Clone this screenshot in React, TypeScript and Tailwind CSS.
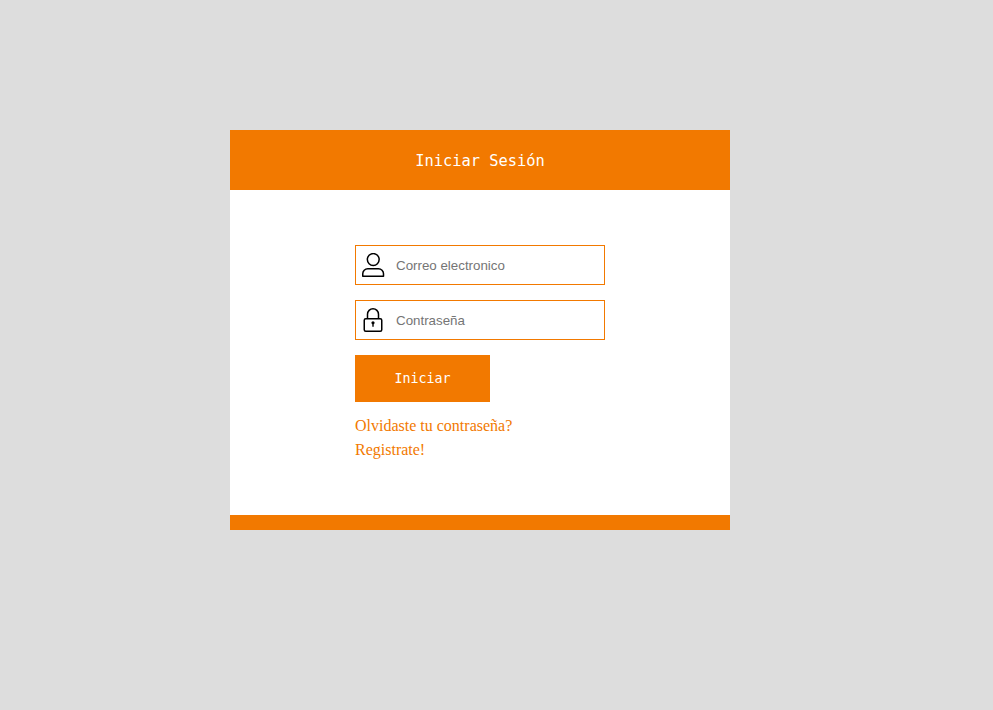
import React from 'react';

const UserIcon = () => (
  <svg className="w-6 h-6 shrink-0" viewBox="0 0 24 24" fill="none" stroke="#000" strokeWidth={1.5}>
    <circle cx="12.25" cy="6.5" r="5.9" />
    <path d="M1.75 23.25v-2.5c0-2.75 2.25-5 5-5h10.75c2.75 0 5 2.25 5 5v2.5z" strokeLinejoin="round" />
  </svg>
);

const LockIcon = () => (
  <svg className="w-6 h-6 shrink-0" viewBox="0 0 24 24" fill="none" stroke="#000" strokeWidth={1.5}>
    <path d="M6.5 10.5V6.25a5.5 5.5 0 0 1 11 0v4.25" />
    <rect x="3.25" y="10.75" width="17.5" height="12.5" rx="1.5" />
    <circle cx="12" cy="14.75" r="1.6" fill="#000" stroke="none" />
    <path d="M12 15v3.75" strokeWidth={1.4} />
  </svg>
);

const App: React.FC = () => {
  return (
    <div className="min-h-screen bg-[#dddddd] pt-[130px] pl-[230px]">
      <div className="w-[500px] h-[400px] bg-white flex flex-col">
        <div className="h-[60px] pt-1 bg-[#f27900] flex items-center justify-center text-white text-[15.4px] font-['DejaVu_Sans_Mono',monospace]">
          Iniciar Sesión
        </div>

        <div className="flex-1 pt-[55px] pl-[125px]">
          <div className="w-[250px] h-10 border border-[#f27900] flex items-center pl-[5px]">
            <UserIcon />
            <input
              className="ml-[11px] pt-[2px] flex-1 min-w-0 outline-none text-[13.33px] font-['Liberation_Sans',Arial,sans-serif] placeholder:text-[#757575]"
              placeholder="Correo electronico"
            />
          </div>
          <div className="w-[250px] h-10 mt-[15px] border border-[#f27900] flex items-center pl-[5px]">
            <LockIcon />
            <input
              className="ml-[11px] pt-[2px] flex-1 min-w-0 outline-none text-[13.33px] font-['Liberation_Sans',Arial,sans-serif] placeholder:text-[#757575]"
              placeholder="Contraseña"
            />
          </div>
          <button className="block w-[135px] h-[47px] mt-[15px] bg-[#f27900] text-white text-[13.33px] font-['DejaVu_Sans_Mono',monospace]">
            Iniciar
          </button>
          <div className="mt-3 text-base leading-[23px] text-[#f27900] font-['Liberation_Serif','Times_New_Roman',serif]">
            <a className="block mb-px" href="#">Olvidaste tu contraseña?</a>
            <a className="block" href="#">Registrate!</a>
          </div>
        </div>

        <div className="h-[15px] bg-[#f27900]" />
      </div>
    </div>
  );
};

export default App;
